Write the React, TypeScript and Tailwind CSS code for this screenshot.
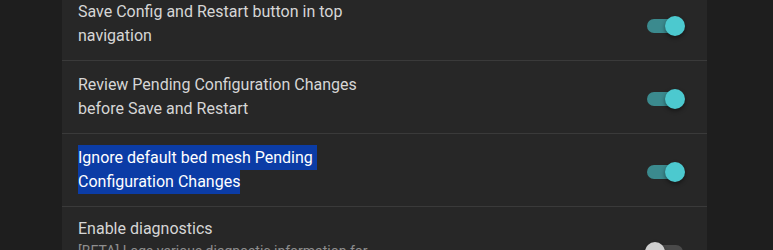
import type { ReactNode } from "react";

function Toggle({ on }: { on: boolean }) {
  return (
    <span aria-hidden className="relative mt-1 block h-5 w-[40px] shrink-0">
      <span
        className={
          on
            ? "absolute left-0 top-[3px] h-[14px] w-[36px] rounded-full bg-[#3b8a8e]"
            : "absolute left-0 top-[3px] h-[14px] w-[36px] rounded-full bg-[#4a4a4a]"
        }
      />
      <span
        className={
          on
            ? "absolute left-[18px] top-0 size-5 rounded-full bg-[#4cc9cf] shadow-[0_2px_4px_rgba(0,0,0,0.45)]"
            : "absolute left-[-2px] top-0 size-5 rounded-full bg-[#cfcfcf] shadow-[0_2px_4px_rgba(0,0,0,0.45)]"
        }
      />
    </span>
  );
}

function SettingRow({
  title,
  sub,
  on,
  last,
}: {
  title: ReactNode;
  sub?: string;
  on: boolean;
  last?: boolean;
}) {
  return (
    <div
      className={
        last
          ? "flex items-center pl-4 pr-5 py-3"
          : "flex items-center border-b border-[#3a3a3a] pl-4 pr-5 py-3"
      }
    >
      <div className="min-w-0 flex-1">
        <div
          className={
            sub
              ? "max-w-[300px] text-[16px] leading-[20px] text-[#d6d6d6]"
              : "max-w-[300px] text-[16px] leading-[24px] text-[#d6d6d6]"
          }
        >
          {title}
        </div>
        {sub && (
          <div className="mt-0.5 max-w-[300px] text-[14px] leading-[20px] text-[#8e8e8e]">
            {sub}
          </div>
        )}
      </div>
      <Toggle on={on} />
    </div>
  );
}

export default function App() {
  return (
    <div
      className="h-[250px] overflow-hidden bg-[#1e1e1e] pl-[62px] pr-[66px] [font-family:Roboto,'Liberation_Sans',sans-serif]"
      style={{ width: 773 }}
    >
      <div className="-mt-3 bg-[#272727]">
        <SettingRow
          title="Save Config and Restart button in top navigation"
          on
        />
        <SettingRow
          title="Review Pending Configuration Changes before Save and Restart"
          on
        />
        <SettingRow
          title={
            <span className="bg-[#0b3ca6] py-[2.6px] text-white [box-decoration-break:clone]">
              Ignore default bed mesh Pending{"\u00a0"} Configuration Changes
            </span>
          }
          on
        />
        <SettingRow
          title="Enable diagnostics"
          sub="[BETA] Logs various diagnostic information for debugging issues with your printer"
          on={false}
          last
        />
      </div>
    </div>
  );
}
